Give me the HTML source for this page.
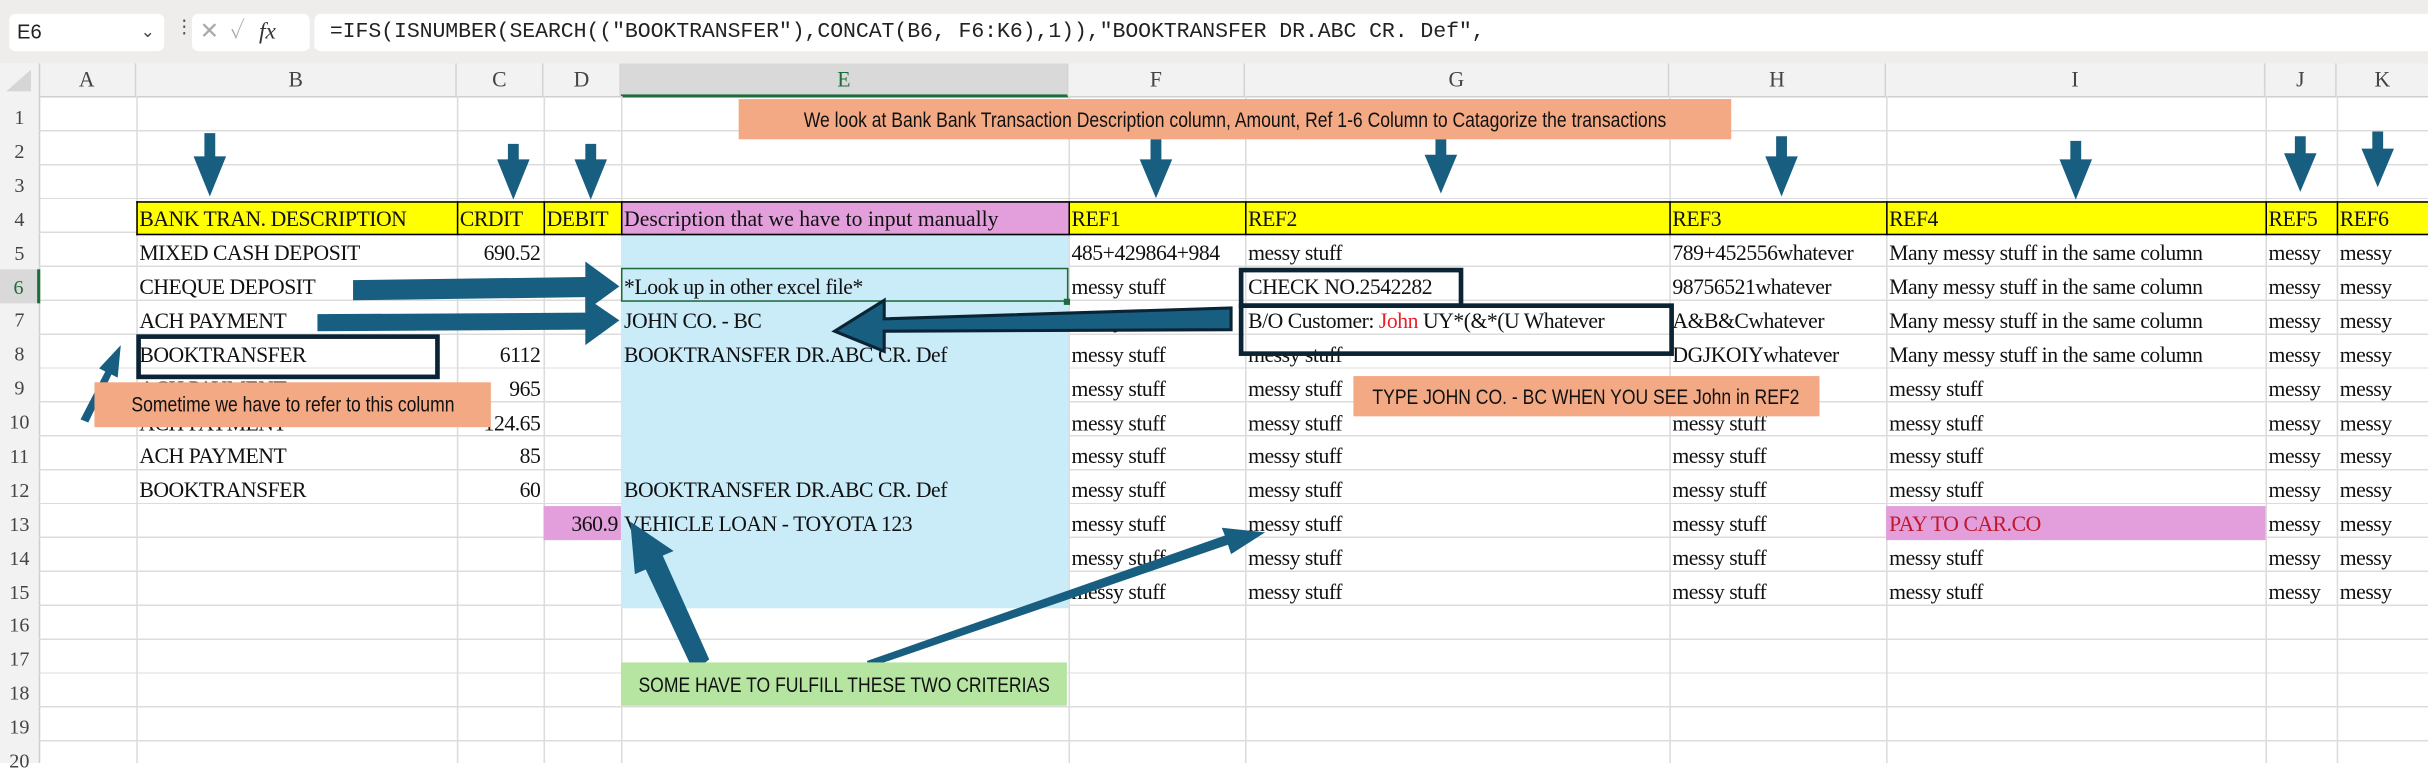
<!DOCTYPE html>
<html><head><meta charset="utf-8"><style>
html,body{margin:0;padding:0;width:2428px;height:763px;overflow:hidden;background:#fff}
#w{position:absolute;left:0;top:0;width:1568px;height:493px;transform:scale(1.5485,1.5477);transform-origin:0 0;font-family:"Liberation Serif","Noto Serif CJK SC",serif}
.a{position:absolute}
.c{position:absolute;height:22px;line-height:25px;font-size:14px;white-space:nowrap;color:#111;letter-spacing:-0.3px}
.r{text-align:right}
.h{position:absolute;top:41px;height:21px;line-height:23px;font-size:14px;color:#444;text-align:center;border-right:1px solid #d4d4d4}
.n{position:absolute;left:0;width:25px;height:22px;line-height:24px;font-size:13px;color:#444;text-align:center}
.v{position:absolute;top:62px;width:1px;height:431px;background:#dcdcdc}
.call{position:absolute;font-family:"Liberation Sans",sans-serif;font-size:13.5px;color:#111;white-space:nowrap;display:flex;align-items:center;justify-content:center}
.call span{display:inline-block;transform:scaleX(0.84)}
.bx{position:absolute;border:3px solid #0b2435;box-sizing:border-box}
</style></head><body><div id="w">
<div class="a" style="left:0;top:0;width:1568px;height:41px;background:#efedeb"></div>
<div class="a" style="left:6px;top:9px;width:100px;height:24px;background:#fff;border-radius:4px;font-size:13px;line-height:24px;font-family:'Liberation Sans',sans-serif;color:#222"><span style="margin-left:5px">E6</span><span style="position:absolute;right:6px;top:0;color:#444;font-size:11px">&#8964;</span></div>
<div class="a" style="left:113px;top:13px;width:3px;height:16px;color:#555;font-size:12px;line-height:8px">⋮</div>
<div class="a" style="left:124px;top:9px;width:76px;height:24px;background:#fff;border-radius:4px;font-size:15px;line-height:24px;color:#aaa"><span style="margin-left:5px">✕</span><span style="margin-left:7px">✓</span><i style="margin-left:9px;color:#333;font-size:15px">fx</i></div>
<div class="a" style="left:203px;top:9px;width:1365px;height:24px;background:#fff;border-radius:4px 0 0 4px"></div>
<div class="a" style="left:213px;top:9px;line-height:25px;font-family:'Liberation Mono',monospace;font-size:13.9px;color:#222;white-space:nowrap;letter-spacing:-0.05px">=IFS(ISNUMBER(SEARCH(("BOOKTRANSFER"),CONCAT(B6, F6:K6),1)),"BOOKTRANSFER DR.ABC CR. Def",</div>
<div class="a" style="left:0;top:41px;width:1568px;height:21px;background:#f2f2f2;border-bottom:1px solid #cfcfcf"></div>
<div class="a" style="left:0;top:41px;width:25px;height:452px;background:#f2f2f2;border-right:1px solid #cfcfcf"></div>
<div class="a" style="left:4px;top:45px;width:0;height:0;border-left:16px solid transparent;border-bottom:14px solid #d6d6d6"></div>
<div class="h" style="left:25px;width:62px">A</div>
<div class="h" style="left:88px;width:206px">B</div>
<div class="h" style="left:295px;width:55px">C</div>
<div class="h" style="left:351px;width:49px">D</div>
<div class="h" style="left:401px;width:288px;background:#d9d9d9;color:#1e6b3c;border-bottom:2px solid #1e6b3c;height:20px">E</div>
<div class="h" style="left:690px;width:113px">F</div>
<div class="h" style="left:804px;width:273px">G</div>
<div class="h" style="left:1078px;width:139px">H</div>
<div class="h" style="left:1218px;width:244px">I</div>
<div class="h" style="left:1463px;width:45px">J</div>
<div class="h" style="left:1509px;width:59px;border:0">K</div>
<div class="a" style="left:25px;top:63px;width:1543px;height:430px;background:repeating-linear-gradient(to bottom,transparent 0,transparent 21px,#dcdcdc 21px,#dcdcdc 21.9px)"></div>
<div class="v" style="left:88px"></div><div class="v" style="left:295px"></div><div class="v" style="left:351px"></div><div class="v" style="left:401px"></div><div class="v" style="left:690px"></div><div class="v" style="left:804px"></div><div class="v" style="left:1078px"></div><div class="v" style="left:1218px"></div><div class="v" style="left:1463px"></div><div class="v" style="left:1509px"></div>
<div class="n" style="top:64px">1</div><div class="n" style="top:86px">2</div><div class="n" style="top:108px">3</div><div class="n" style="top:130px">4</div><div class="n" style="top:152px">5</div>
<div class="n" style="top:173.5px;background:#d9d9d9;color:#1e6b3c;border-right:2px solid #1e6b3c;width:24px">6</div>
<div class="n" style="top:195px">7</div><div class="n" style="top:217px">8</div><div class="n" style="top:239px">9</div><div class="n" style="top:261px">10</div><div class="n" style="top:283px">11</div><div class="n" style="top:305px">12</div><div class="n" style="top:327px">13</div><div class="n" style="top:349px">14</div><div class="n" style="top:371px">15</div><div class="n" style="top:392px">16</div><div class="n" style="top:414px">17</div><div class="n" style="top:436px">18</div><div class="n" style="top:458px">19</div><div class="n" style="top:480px">20</div>
<div class="a" style="left:401px;top:151.6px;width:289px;height:241px;background:#caecf9"></div>
<div class="a" style="left:351px;top:326.8px;width:50px;height:21.9px;background:#e29fdc"></div>
<div class="a" style="left:1218px;top:326.8px;width:245px;height:21.9px;background:#e29fdc"></div>
<div class="a" style="left:88px;top:129.7px;width:1480px;height:21.9px;background:#ffff00;border-top:1.5px solid #000;border-bottom:1.5px solid #000;box-sizing:border-box"></div>
<div class="a" style="left:401px;top:129.7px;width:289px;height:21.9px;background:#e29fdc;border-top:1.5px solid #000;border-bottom:1.5px solid #000;box-sizing:border-box"></div>
<div class="a" style="left:88px;top:129.7px;width:1px;height:22px;background:#000"></div>
<div class="a" style="left:295px;top:129.7px;width:1px;height:22px;background:#000"></div>
<div class="a" style="left:351px;top:129.7px;width:1px;height:22px;background:#000"></div>
<div class="a" style="left:401px;top:129.7px;width:1px;height:22px;background:#000"></div>
<div class="a" style="left:690px;top:129.7px;width:1px;height:22px;background:#000"></div>
<div class="a" style="left:804px;top:129.7px;width:1px;height:22px;background:#000"></div>
<div class="a" style="left:1078px;top:129.7px;width:1px;height:22px;background:#000"></div>
<div class="a" style="left:1218px;top:129.7px;width:1px;height:22px;background:#000"></div>
<div class="a" style="left:1463px;top:129.7px;width:1px;height:22px;background:#000"></div>
<div class="a" style="left:1509px;top:129.7px;width:1px;height:22px;background:#000"></div>
<div class="c" style="left:90px;top:130px">BANK TRAN. DESCRIPTION</div>
<div class="c" style="left:297px;top:130px">CRDIT</div>
<div class="c" style="left:353px;top:130px">DEBIT</div>
<div class="c" style="left:403px;top:130px;letter-spacing:0">Description that we have to input manually</div>
<div class="c" style="left:692px;top:130px">REF1</div>
<div class="c" style="left:806px;top:130px">REF2</div>
<div class="c" style="left:1080px;top:130px">REF3</div>
<div class="c" style="left:1220px;top:130px">REF4</div>
<div class="c" style="left:1465px;top:130px">REF5</div>
<div class="c" style="left:1511px;top:130px">REF6</div>
<div class="c" style="left:90px;top:152px">MIXED CASH DEPOSIT</div>
<div class="c" style="left:90px;top:174px">CHEQUE DEPOSIT</div>
<div class="c" style="left:90px;top:196px">ACH PAYMENT</div>
<div class="c" style="left:90px;top:218px">BOOKTRANSFER</div>
<div class="c" style="left:90px;top:240px">ACH PAYMENT</div>
<div class="c" style="left:90px;top:262px">ACH PAYMENT</div>
<div class="c" style="left:90px;top:283px">ACH PAYMENT</div>
<div class="c" style="left:90px;top:305px">BOOKTRANSFER</div>
<div class="c r" style="left:295px;width:54px;top:152px">690.52</div>
<div class="c r" style="left:295px;width:54px;top:174px">70</div>
<div class="c r" style="left:295px;width:54px;top:196px">81</div>
<div class="c r" style="left:295px;width:54px;top:218px">6112</div>
<div class="c r" style="left:295px;width:54px;top:240px">965</div>
<div class="c r" style="left:295px;width:54px;top:262px">124.65</div>
<div class="c r" style="left:295px;width:54px;top:283px">85</div>
<div class="c r" style="left:295px;width:54px;top:305px">60</div>
<div class="c r" style="left:351px;width:48px;top:327px">360.9</div>
<div class="c" style="left:403px;top:174px">*Look up in other excel file*</div>
<div class="c" style="left:403px;top:196px">JOHN CO. - BC</div>
<div class="c" style="left:403px;top:218px">BOOKTRANSFER DR.ABC CR. Def</div>
<div class="c" style="left:403px;top:305px">BOOKTRANSFER DR.ABC CR. Def</div>
<div class="c" style="left:403px;top:327px">VEHICLE LOAN - TOYOTA 123</div>
<div class="a" style="left:401px;top:173px;width:289px;height:22px;border:1.5px solid #1e6b3c;box-sizing:border-box"></div>
<div class="a" style="left:687px;top:193px;width:4px;height:4px;background:#1e6b3c"></div>
<div class="c" style="left:692px;top:152px">485+429864+984</div>
<div class="c" style="left:692px;top:174px">messy stuff</div>
<div class="c" style="left:692px;top:196px">messy stuff</div>
<div class="c" style="left:692px;top:218px">messy stuff</div>
<div class="c" style="left:692px;top:240px">messy stuff</div>
<div class="c" style="left:692px;top:262px">messy stuff</div>
<div class="c" style="left:692px;top:283px">messy stuff</div>
<div class="c" style="left:692px;top:305px">messy stuff</div>
<div class="c" style="left:692px;top:327px">messy stuff</div>
<div class="c" style="left:692px;top:349px">messy stuff</div>
<div class="c" style="left:692px;top:371px">messy stuff</div>
<div class="c" style="left:806px;top:152px">messy stuff</div>
<div class="c" style="left:806px;top:174px">CHECK NO.2542282</div>
<div class="c" style="left:806px;top:196px">B/O Customer: <span style="color:#e8202a">John</span> UY*(&amp;*(U Whatever</div>
<div class="c" style="left:806px;top:218px">messy stuff</div>
<div class="c" style="left:806px;top:240px">messy stuff</div>
<div class="c" style="left:806px;top:262px">messy stuff</div>
<div class="c" style="left:806px;top:283px">messy stuff</div>
<div class="c" style="left:806px;top:305px">messy stuff</div>
<div class="c" style="left:806px;top:327px">messy stuff</div>
<div class="c" style="left:806px;top:349px">messy stuff</div>
<div class="c" style="left:806px;top:371px">messy stuff</div>
<div class="c" style="left:1080px;top:152px">789+452556whatever</div>
<div class="c" style="left:1080px;top:174px">98756521whatever</div>
<div class="c" style="left:1080px;top:196px">A&amp;B&amp;Cwhatever</div>
<div class="c" style="left:1080px;top:218px">DGJKOIYwhatever</div>
<div class="c" style="left:1080px;top:240px">messy stuff</div>
<div class="c" style="left:1080px;top:262px">messy stuff</div>
<div class="c" style="left:1080px;top:283px">messy stuff</div>
<div class="c" style="left:1080px;top:305px">messy stuff</div>
<div class="c" style="left:1080px;top:327px">messy stuff</div>
<div class="c" style="left:1080px;top:349px">messy stuff</div>
<div class="c" style="left:1080px;top:371px">messy stuff</div>
<div class="c" style="left:1220px;top:152px">Many messy stuff in the same column</div>
<div class="c" style="left:1220px;top:174px">Many messy stuff in the same column</div>
<div class="c" style="left:1220px;top:196px">Many messy stuff in the same column</div>
<div class="c" style="left:1220px;top:218px">Many messy stuff in the same column</div>
<div class="c" style="left:1220px;top:240px">messy stuff</div>
<div class="c" style="left:1220px;top:262px">messy stuff</div>
<div class="c" style="left:1220px;top:283px">messy stuff</div>
<div class="c" style="left:1220px;top:305px">messy stuff</div>
<div class="c" style="left:1220px;top:327px;color:#c0182a">PAY TO CAR.CO</div>
<div class="c" style="left:1220px;top:349px">messy stuff</div>
<div class="c" style="left:1220px;top:371px">messy stuff</div>
<div class="c" style="left:1465px;top:152px">messy</div><div class="c" style="left:1511px;top:152px">messy</div>
<div class="c" style="left:1465px;top:174px">messy</div><div class="c" style="left:1511px;top:174px">messy</div>
<div class="c" style="left:1465px;top:196px">messy</div><div class="c" style="left:1511px;top:196px">messy</div>
<div class="c" style="left:1465px;top:218px">messy</div><div class="c" style="left:1511px;top:218px">messy</div>
<div class="c" style="left:1465px;top:240px">messy</div><div class="c" style="left:1511px;top:240px">messy</div>
<div class="c" style="left:1465px;top:262px">messy</div><div class="c" style="left:1511px;top:262px">messy</div>
<div class="c" style="left:1465px;top:283px">messy</div><div class="c" style="left:1511px;top:283px">messy</div>
<div class="c" style="left:1465px;top:305px">messy</div><div class="c" style="left:1511px;top:305px">messy</div>
<div class="c" style="left:1465px;top:327px">messy</div><div class="c" style="left:1511px;top:327px">messy</div>
<div class="c" style="left:1465px;top:349px">messy</div><div class="c" style="left:1511px;top:349px">messy</div>
<div class="c" style="left:1465px;top:371px">messy</div><div class="c" style="left:1511px;top:371px">messy</div>
<div class="bx" style="left:88px;top:216px;width:196px;height:29px"></div>
<div class="bx" style="left:800px;top:173px;width:145px;height:26px"></div>
<div class="bx" style="left:800px;top:196px;width:281px;height:34px"></div>
<svg class="a" style="left:0;top:0" width="1568" height="493" viewBox="0 0 1568 493">
<g fill="#175e80">
<path d="M132 86h7v15h7l-10.5 26-10.5-26h7z"/>
<path d="M328 93h7v10h7l-10.5 26-10.5-26h7z"/>
<path d="M378 93h7v10h7l-10.5 26-10.5-26h7z"/>
<path d="M743 90h7v13h7l-10.5 25-10.5-25h7z"/>
<path d="M927 90h7v10h7l-10.5 25-10.5-25h7z"/>
<path d="M1147 88h7v13h7l-10.5 26-10.5-26h7z"/>
<path d="M1337 91h7v12h7l-10.5 26-10.5-26h7z"/>
<path d="M1482 88h7v11h7l-10.5 25-10.5-25h7z"/>
<path d="M1532 85h7v11h7l-10.5 25-10.5-25h7z"/>
<path d="M228 181l150-2v-10l22 16-22 16v-9l-150 2z"/>
<path d="M205 203l173-1v-10l22 15-22 16v-10l-173 1z"/>
<path d="M795 199v14l-224 1v13l-32-13 32-20v12z" stroke="#0b2435" stroke-width="2"/>
<path d="M78 223l-14 15 4 2-16 31 5 2 15-31 4 2z"/>
<path d="M458 426l-30-67 7-3-28-19 3 34 7-3 31 66z"/>
<path d="M560 428l5 2 228-78 2 6 22-14-28-3 2 5-231 81z"/>
</g>
</svg>
<div class="call" style="left:477px;top:64px;width:641px;height:26px;background:#f2a984"><span>We look at Bank Bank Transaction Description column, Amount, Ref 1-6 Column to Catagorize the transactions</span></div>
<div class="call" style="left:61px;top:247px;width:256px;height:29px;background:#f2a984"><span>Sometime we have to refer to this column</span></div>
<div class="call" style="left:874px;top:243px;width:301px;height:26px;background:#f2a984"><span>TYPE JOHN CO. - BC WHEN YOU SEE John in REF2</span></div>
<div class="call" style="left:401px;top:428px;width:288px;height:28px;background:#b5e5a1"><span>SOME HAVE TO FULFILL THESE TWO CRITERIAS</span></div>
</div></body></html>
